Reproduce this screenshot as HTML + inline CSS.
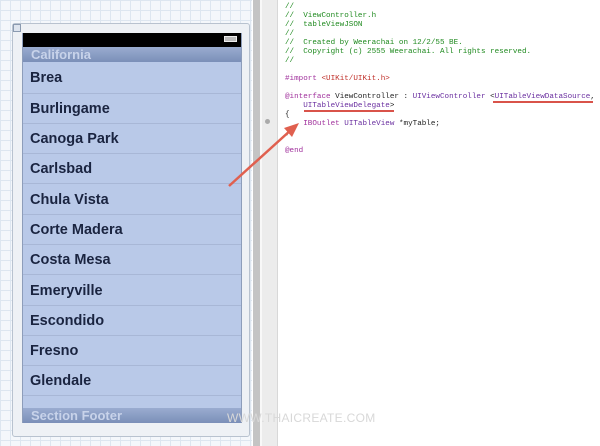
<!DOCTYPE html>
<html><head><style>
*{margin:0;padding:0;box-sizing:border-box}
body{width:600px;height:446px;overflow:hidden;position:relative;background:#fff;font-family:"Liberation Sans",sans-serif}
.grid{position:absolute;left:0;top:0;width:252px;height:446px;background-color:#f4f7fb;
background-image:linear-gradient(#dde6f0 1px,transparent 1px),linear-gradient(90deg,#dde6f0 1px,transparent 1px);background-size:10px 10px}
.frame{position:absolute;left:12px;top:23px;width:238px;height:414px;border:1px solid #b8c2cf;border-radius:3px;background:#eef1f5}
.dev{position:absolute;left:22px;top:33px;width:220px;height:390px;background:#b9c9e8;border-left:1px solid #8d9dba;border-right:1px solid #8d9dba}
.status{position:absolute;left:0;top:0;width:100%;height:14px;background:#000}
.hdr{position:absolute;left:0;width:100%;height:15px;background:linear-gradient(#9aacd0,#7b8fb8);color:#c8d3ea;font-weight:bold;font-size:13px;padding-left:8px;line-height:15px}
.row{position:absolute;left:0;width:100%;height:30px;border-bottom:1px solid #a8b7d6;font-weight:bold;font-size:14.5px;color:#1a2440;padding-left:7px;line-height:30px}
.sb{position:absolute;left:253px;top:0;width:7px;height:446px;background:#c4c4c4}
.gut{position:absolute;left:260px;top:0;width:18px;height:446px;background:#ececec;border-left:2px solid #f8f8f8;border-right:1px solid #d8d8d8}
.code{position:absolute;left:285px;top:3px;font-family:"Liberation Mono",monospace;font-size:7.6px;line-height:9px;white-space:pre;color:#222}
.c{color:#1f8a1f}.k{color:#a0309c}.s{color:#c0302a}.t{color:#6a2fa0}
.u{position:absolute;height:2px;background:#d9534a}
.wm{position:absolute;left:227px;top:411px;font-size:12px;color:#d8d8d8;letter-spacing:0.3px}
</style></head><body>
<div class="grid"></div>
<div class="frame"></div>
<div style="position:absolute;left:13px;top:24px;width:8px;height:8px;border:1px solid #8a9ab0;background:#dde4ee"></div>
<div class="dev">
<div class="status"><div style="position:absolute;right:4px;top:3px;width:13px;height:6px;background:#bbb;border:1px solid #eee"></div></div>
<div class="hdr" style="top:14px">California</div>
<div class="row" style="top:29px;height:32px;line-height:32px">Brea</div>
<div class="row" style="top:61px">Burlingame</div>
<div class="row" style="top:91px">Canoga Park</div>
<div class="row" style="top:121px">Carlsbad</div>
<div class="row" style="top:151.5px">Chula Vista</div>
<div class="row" style="top:182px">Corte Madera</div>
<div class="row" style="top:212px">Costa Mesa</div>
<div class="row" style="top:242.5px">Emeryville</div>
<div class="row" style="top:273px">Escondido</div>
<div class="row" style="top:303px">Fresno</div>
<div class="row" style="top:333px">Glendale</div>
<div class="hdr" style="top:375px">Section Footer</div>
</div>
<div class="sb"></div>
<div class="gut"><div style="position:absolute;left:3px;top:119px;width:5px;height:5px;border-radius:50%;background:#aaa"></div></div>
<div class="code"><span class="c">//
//  ViewController.h
//  tableViewJSON
//
//  Created by Weerachai on 12/2/55 BE.
//  Copyright (c) 2555 Weerachai. All rights reserved.
//</span>

<span class="k">#import</span> <span class="s">&lt;UIKit/UIKit.h&gt;</span>

<span class="k">@interface</span> ViewController : <span class="t">UIViewController</span> &lt;<span class="t">UITableViewDataSource</span>,
    <span class="t">UITableViewDelegate</span>&gt;
{
    <span class="k">IBOutlet</span> <span class="t">UITableView</span> *myTable;
}

<span class="k">@end</span></div>
<div class="u" style="left:493px;top:101px;width:100px"></div>
<div class="u" style="left:304px;top:110px;width:90px"></div>
<svg style="position:absolute;left:0;top:0" width="600" height="446"><line x1="229" y1="186" x2="292" y2="129" stroke="#e0604f" stroke-width="2.5"/><polygon points="299,123 284,128 292,137" fill="#e0604f"/></svg>
<div class="wm">WWW.THAICREATE.COM</div>
</body></html>
